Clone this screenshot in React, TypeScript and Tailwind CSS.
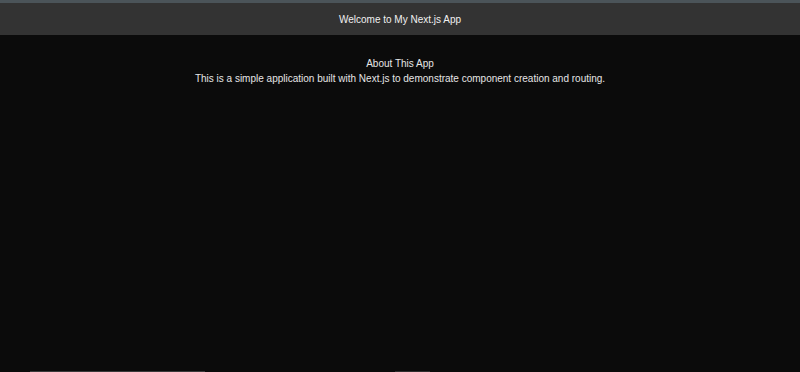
export default function App() {
  return (
    <main
      className="flex h-screen flex-col bg-[#0b0b0b] text-[#e6e6e6]"
      style={{ fontFamily: '"Liberation Sans", Arial, sans-serif' }}
    >
      {/* header */}
      <header className="border-t-[3px] border-[#4b5459] bg-[#333333]">
        <h1 className="flex h-[32px] items-center justify-center pt-px text-[10px] text-[#f0f0f0]">
          Welcome to My Next.js App
        </h1>
      </header>

      {/* about section */}
      <section className="flex-1 pt-[21px] text-center text-[10px] leading-[15px]">
        <h2>About This App</h2>
        <p>
          This is a simple application built with Next.js to demonstrate
          component creation and routing.
        </p>
      </section>

      {/* cut-off bottom edge */}
      <div className="flex h-[2px] items-end">
        <div className="ml-[30px] h-px w-[175px] bg-[#3a3a3a]" />
        <div className="ml-[190px] h-px w-[35px] bg-[#2e2e2e]" />
      </div>
    </main>
  );
}
